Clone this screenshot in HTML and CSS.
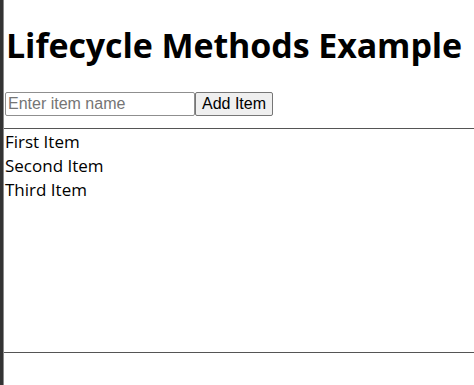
FILE: index.html
```html
<!DOCTYPE html>
<html>
<head>
<meta charset="utf-8">
<link rel="stylesheet" href="styles.css">
</head>
<body>
<div class="frame">
  <div class="page">
    <h1 class="title">Lifecycle Methods Example</h1>
    <div class="controls">
      <input class="item-input" type="text" placeholder="Enter item name">
      <button class="add-btn">Add Item</button>
    </div>
    <ul class="item-list">
      <li>First Item</li>
      <li>Second Item</li>
      <li>Third Item</li>
    </ul>
  </div>
</div>
</body>
</html>
```
FILE: styles.css
```css
html, body {
  margin: 0;
  padding: 0;
  background: #fff;
}
.frame {
  min-height: 385px;
  border-left: 3px solid #333;
  box-shadow: inset 1px 0 0 #8a8a8a;
  box-sizing: border-box;
}
.page {
  padding-left: 1px;
  font-family: "Open Sans", "Noto Sans", sans-serif;
  color: #000;
}
.title {
  font-size: 34px;
  font-weight: 700;
  margin: 0;
  padding: 23px 0 0 2px;
  line-height: 44px;
  letter-spacing: -0.1px;
}
.controls {
  display: flex;
  margin-top: 25px;
  padding-left: 1px;
}
.item-input {
  width: 190px;
  height: 24px;
  box-sizing: border-box;
  border: 1px solid #8f8f8f;
  border-radius: 2px;
  padding: 1px 2px;
  font-family: "Liberation Sans", Arial, sans-serif;
  font-size: 16px;
  margin: 0;
}
.item-input::placeholder {
  color: #757575;
}
.add-btn {
  height: 24px;
  box-sizing: border-box;
  border: 1px solid #767676;
  border-radius: 2px;
  background: #efefef;
  font-family: "Liberation Sans", Arial, sans-serif;
  font-size: 16px;
  padding: 0 6px;
  margin: 0;
  color: #000;
}
.item-list {
  list-style: none;
  margin: 12px 0 0;
  padding: 1px 0 0 1px;
  height: 222px;
  border-top: 1px solid #555;
  border-bottom: 1px solid #555;
  font-size: 17px;
  line-height: 24px;
}
```
